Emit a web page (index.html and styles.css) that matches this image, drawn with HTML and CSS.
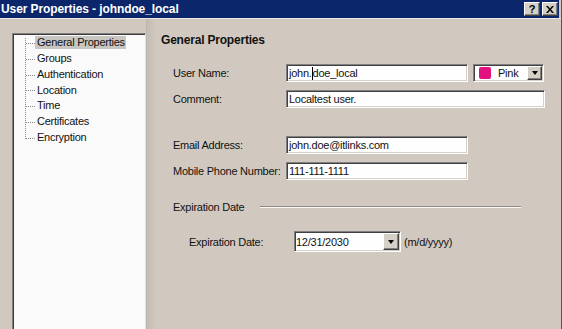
FILE: index.html
```html
<!DOCTYPE html>
<html lang="en">
<head>
    <meta charset="UTF-8">
    <title>User Properties - johndoe_local</title>
    <link rel="stylesheet" href="styles.css">
</head>
<body>
    <div class="window">
        <!-- Title bar -->
        <div class="titlebar">
            <span class="title">User Properties - johndoe_local</span>
            <div class="caption-buttons">
                <button class="cap-btn help">?</button>
                <button class="cap-btn close">
                    <svg width="8" height="7" viewBox="0 0 8 7"><path d="M0 0h2l2 2.5L6 0h2L5 3.5 8 7H6L4 4.5 2 7H0l3-3.5z" fill="#000"/></svg>
                </button>
            </div>
        </div>

        <div class="client">
            <!-- Left navigation tree -->
            <div class="tree">
                <ul>
                    <li class="selected"><span>General Properties</span></li>
                    <li><span>Groups</span></li>
                    <li><span>Authentication</span></li>
                    <li><span>Location</span></li>
                    <li><span>Time</span></li>
                    <li><span>Certificates</span></li>
                    <li><span>Encryption</span></li>
                </ul>
            </div>

            <!-- Property page -->
            <div class="page">
                <h2>General Properties</h2>

                <div class="group first">
                    <div class="row">
                        <label>User Name:</label>
                        <div class="field short">john.<span class="caret"></span>doe_local</div>
                        <div class="combo color">
                            <span class="swatch"></span>
                            <span class="combo-text">Pink</span>
                            <span class="drop"><i></i></span>
                        </div>
                    </div>
                    <div class="row">
                        <label>Comment:</label>
                        <div class="field long">Localtest user.</div>
                    </div>
                </div>

                <div class="group second">
                    <div class="row">
                        <label>Email Address:</label>
                        <div class="field short">john.doe@itlinks.com</div>
                    </div>
                    <div class="row">
                        <label>Mobile Phone Number:</label>
                        <div class="field short">111-111-1111</div>
                    </div>
                </div>

                <div class="section">
                    <span>Expiration Date</span>
                    <div class="etched"></div>
                </div>

                <div class="row date-row">
                    <label>Expiration Date:</label>
                    <div class="combo date">
                        <span class="combo-text">12/31/2030</span>
                        <span class="drop"><i></i></span>
                    </div>
                    <span class="hint">(m/d/yyyy)</span>
                </div>
            </div>
        </div>
    </div>
</body>
</html>
```

FILE: styles.css
```css
* {
    box-sizing: border-box;
}

body {
    margin: 0;
    font-family: "Liberation Sans", Arial, sans-serif;
    font-size: 11px;
    letter-spacing: -0.25px;
    color: #111;
    background: #d1c9bf;
}

.window {
    width: 562px;
    height: 329px;
    display: flex;
    flex-direction: column;
    border-right: 1px solid #5a5550;
    overflow: hidden;
}

/* ---- title bar ---- */
.titlebar {
    height: 18px;
    flex: none;
    margin-right: 2px;
    padding: 0 1px 0 1px;
    background: #0b266b;
    color: white;
    display: flex;
    align-items: center;
    justify-content: space-between;
}

.title {
    font-size: 12px;
    font-weight: bold;
    letter-spacing: -0.1px;
}

.caption-buttons {
    display: flex;
    gap: 2px;
}

.cap-btn {
    width: 16px;
    height: 14px;
    padding: 0;
    margin: 0;
    background: #d4d0c8;
    border: 1px solid;
    border-color: #ffffff #404040 #404040 #ffffff;
    box-shadow: inset -1px -1px #808080;
    display: flex;
    align-items: center;
    justify-content: center;
    font-family: "Liberation Sans", Arial, sans-serif;
    font-size: 11px;
    font-weight: bold;
    line-height: 1;
    color: #000;
}

/* ---- client area ---- */
.client {
    flex: 1;
    display: flex;
    border-top: 1px solid #ebe7e1;
}

.tree {
    width: 134px;
    margin: 14px 0 0 12px;
    background: #fafafa;
    border-top: 1px solid #808080;
    border-left: 1px solid #808080;
    border-right: 1px solid #e6e2dc;
    box-shadow: inset 1px 1px #3c3c3c;
}

.tree ul {
    list-style: none;
    margin: 0;
    padding: 1px 0 0 0;
    position: relative;
}

/* vertical dotted branch */
.tree ul::before {
    content: "";
    position: absolute;
    left: 12px;
    top: 4px;
    height: 101px;
    border-left: 1px dotted #8a8a8a;
}

.tree li {
    position: relative;
    height: 15.75px;
    padding-left: 22px;
    display: flex;
    align-items: center;
}

.tree li::before {
    content: "";
    position: absolute;
    left: 13px;
    top: 8px;
    width: 9px;
    border-top: 1px dotted #8a8a8a;
}

.tree li span {
    display: inline-block;
    line-height: 13px;
    padding: 0 1px 0 2px;
}

.tree li.selected span {
    background: #c9c5c1;
}

/* ---- property page ---- */
.page {
    flex: 1;
    border-left: 1px solid #bdb6ad;
    background: linear-gradient(to right, #c5bdb3 0, #d1c9bf 10px);
}

h2 {
    margin: 14px 0 0 14px;
    font-size: 12px;
    line-height: 14px;
    letter-spacing: -0.2px;
}

.group {
    margin-left: 26px;
    display: flex;
    flex-direction: column;
    gap: 8px;
}

.group.first {
    margin-top: 17px;
}

.group.second {
    margin-top: 28px;
}

.row {
    display: flex;
    align-items: center;
    height: 18px;
}

.row label {
    width: 113px;
}

.field {
    height: 18px;
    padding: 0 2px;
    background: #fefefe;
    border: 1px solid;
    border-color: #808080 #ffffff #ffffff #808080;
    box-shadow: inset 1px 1px #404040, inset -1px -1px #d4d0c8;
    display: flex;
    align-items: center;
    white-space: nowrap;
}

.field.short {
    width: 182px;
}

.field.long {
    width: 259px;
}

.caret {
    display: inline-block;
    width: 1px;
    height: 13px;
    background: #000;
}

.combo {
    height: 18px;
    background: #fefefe;
    border: 1px solid;
    border-color: #808080 #ffffff #ffffff #808080;
    box-shadow: inset 1px 1px #404040, inset -1px -1px #d4d0c8;
    display: flex;
    align-items: center;
    padding: 1px;
}

.combo.color {
    width: 71px;
    margin-left: 5px;
}

.swatch {
    width: 12px;
    height: 12px;
    margin-left: 4px;
    margin-right: 7px;
    border-radius: 2px;
    background: #e3117e;
}

.drop {
    margin-left: auto;
    width: 15px;
    height: 100%;
    background: #d4d0c8;
    border: 1px solid;
    border-color: #ffffff #404040 #404040 #ffffff;
    box-shadow: inset -1px -1px #808080;
    display: flex;
    align-items: center;
    justify-content: center;
}

.drop i {
    width: 0;
    height: 0;
    border-left: 3.5px solid transparent;
    border-right: 3.5px solid transparent;
    border-top: 4px solid #000;
}

.section {
    margin: 20px 40px 0 26px;
    height: 14px;
    display: flex;
    align-items: center;
}

.etched {
    flex: 1;
    margin-left: 16px;
    height: 2px;
    border-top: 1px solid #8e887f;
    border-bottom: 1px solid #fbfaf8;
}

.date-row {
    margin: 17px 0 0 42px;
    height: 21px;
}

.date-row label {
    width: 105px;
}

.combo.date {
    width: 107px;
    height: 21px;
}

.combo.date .combo-text {
    padding-left: 0;
}

.combo.date .drop {
    width: 16px;
}

.hint {
    margin-left: 3px;
}
```
